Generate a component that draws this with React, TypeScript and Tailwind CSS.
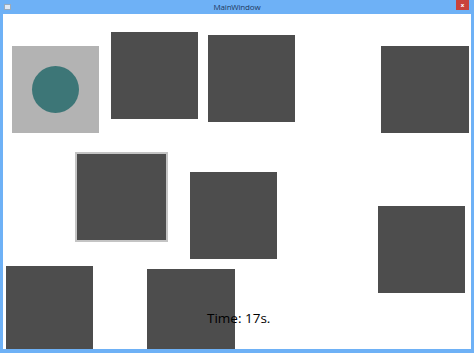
import React from 'react';

type Tile = { x: number; y: number; w?: number; h?: number; selected?: boolean };

// positions inside the client area (origin = top-left of the white canvas)
const tiles: Tile[] = [
  { x: 108, y: 18 },
  { x: 205, y: 21 },
  { x: 378, y: 32, w: 88 },
  { x: 72, y: 138, w: 93, h: 90, selected: true },
  { x: 187, y: 158 },
  { x: 375, y: 192 },
  { x: 3, y: 252 },
  { x: 144, y: 255, w: 88 },
];

export default function App() {
  return (
    <div className="w-[474px] h-[353px] bg-[#6eb1f6] flex flex-col px-[3px] pb-[4px] font-['Open_Sans',sans-serif] overflow-hidden">
      {/* ── Title bar ─────────────────────────────────────────── */}
      <div className="h-[14px] shrink-0 relative flex items-center justify-center">
        <div className="absolute left-[1px] top-[4px] w-[7px] h-[6px] bg-[#dfe9f5] border border-[#9ab]" />
        <span className="text-[8px] leading-none text-[#1e3a5f] tracking-tight">MainWindow</span>
        <div className="absolute right-[2px] top-0 w-[13px] h-[10px] bg-[#c9423b] flex items-center justify-center">
          <span className="text-[6px] leading-none text-white font-bold">x</span>
        </div>
      </div>

      {/* ── Canvas ────────────────────────────────────────────── */}
      <div className="flex-1 bg-white relative overflow-hidden">
        <div className="absolute left-[9px] top-[32px] w-[87px] h-[87px] bg-[#b3b3b3] flex items-center justify-center">
          <div className="w-[47px] h-[47px] rounded-full bg-[#3d7677]" />
        </div>

        {tiles.map((t, i) => (
          <div
            key={i}
            className={`absolute bg-[#4d4d4d] ${t.selected ? 'border-2 border-[#c4c4c4]' : ''}`}
            style={{ left: t.x, top: t.y, width: t.w ?? 87, height: t.h ?? 87 }}
          />
        ))}

        <span className="absolute left-[204px] top-[295px] text-[13.5px] leading-[18px] text-black">
          Time: 17s.
        </span>
      </div>
    </div>
  );
}
